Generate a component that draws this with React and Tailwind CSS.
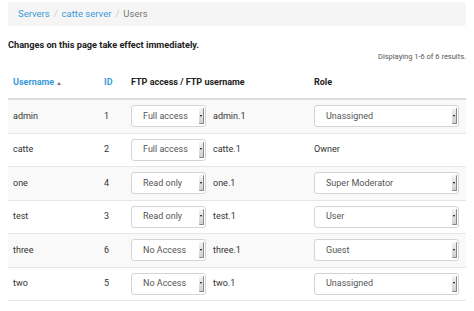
import React from "react";

const rows = [
  { u: "admin", id: 1, ftp: "Full access", fu: "admin.1", role: "Unassigned" },
  { u: "catte", id: 2, ftp: "Full access", fu: "catte.1", role: null },
  { u: "one", id: 4, ftp: "Read only", fu: "one.1", role: "Super Moderator" },
  { u: "test", id: 3, ftp: "Read only", fu: "test.1", role: "User" },
  { u: "three", id: 6, ftp: "No Access", fu: "three.1", role: "Guest" },
  { u: "two", id: 5, ftp: "No Access", fu: "two.1", role: "Unassigned" },
];

function Select({ value, className }) {
  return (
    <div className={"relative h-[22px] bg-white border border-[#d4d4d4] rounded-[3px] flex items-center pl-[11px] text-[#555] " + className}>
      <span>{value}</span>
      <div className="absolute right-[1px] top-[2px] bottom-[2px] w-[5px] bg-gradient-to-b from-[#f4f4f4] to-[#d0d0d0] border-r border-b border-[#888] rounded-[1px] flex items-center justify-center">
        <div className="w-0 h-0 border-l-[1.5px] border-r-[1.5px] border-t-[2px] border-l-transparent border-r-transparent border-t-black" />
      </div>
    </div>
  );
}

export default function App() {
  return (
    <div className="w-[474px] h-[311px] bg-white px-[8px] pt-[2px] text-[9px] text-[#333]" style={{ fontFamily: "Roboto, 'Liberation Sans', sans-serif" }}>
      <div className="h-[24px] bg-[#f5f5f5] rounded-[3px] flex items-center pl-[10px] text-[9.5px]">
        <span className="text-[#3a9bd9]">Servers</span>
        <span className="text-[#ccc] px-[4px]">/</span>
        <span className="text-[#3a9bd9]">catte server</span>
        <span className="text-[#ccc] px-[4px]">/</span>
        <span className="text-[#777]">Users</span>
      </div>
      <div className="mt-[13px] font-bold text-[9.2px] text-[#222] leading-[12px]">Changes on this page take effect immediately.</div>
      <div className="text-right text-[7.5px] text-[#555] leading-[10px] mt-[1px]">Displaying 1-6 of 6 results.</div>
      <div className="mt-[11px]">
        <div className="grid grid-cols-[91px_27px_183px_1fr] h-[27px] items-center font-bold border-b-2 border-[#ddd] pb-[5px]">
          <div className="px-[5px] text-[#3a9bd9] flex items-center gap-[3px]">
            Username
            <span className="w-0 h-0 border-l-[2.5px] border-r-[2.5px] border-b-[3px] border-l-transparent border-r-transparent border-b-[#777]" />
          </div>
          <div className="px-[5px] text-[#3a9bd9]">ID</div>
          <div className="px-[5px] text-[#222]">FTP access / FTP username</div>
          <div className="px-[5px] text-[#222]">Role</div>
        </div>
        {rows.map((r, i) => (
          <div
            key={r.u}
            className={"grid grid-cols-[91px_27px_183px_1fr] h-[33.5px] items-center border-b border-[#e6e6e6] " + (i % 2 === 0 ? "bg-[#f9f9f9]" : "bg-white")}
          >
            <div className="px-[5px]">{r.u}</div>
            <div className="px-[5px]">{r.id}</div>
            <div className="px-[5px] flex items-center gap-[7px]">
              <Select value={r.ftp} className="w-[75px]" />
              <span>{r.fu}</span>
            </div>
            <div className="px-[5px]">
              {r.role ? <Select value={r.role} className="w-[145px]" /> : <span>Owner</span>}
            </div>
          </div>
        ))}
      </div>
    </div>
  );
}
